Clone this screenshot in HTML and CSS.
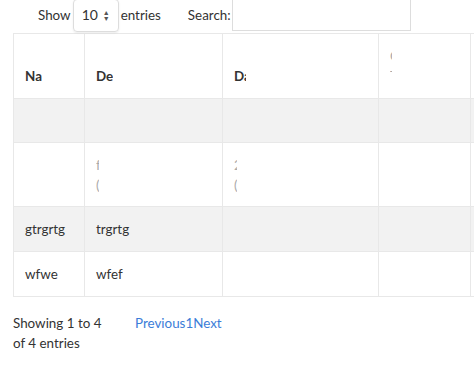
FILE: index.html
```html
<!DOCTYPE html>
<html lang="en">
<head>
    <meta charset="UTF-8">
    <meta name="viewport" content="width=device-width, initial-scale=1.0">
    <title>Entries</title>
    <link rel="stylesheet" href="styles.css">
</head>
<body>
    <div class="controls">
        <label class="length">Show
            <span class="select">10 <span class="arrows">&#9650;<br>&#9660;</span></span>
            entries</label>
        <label class="search">Search:<span class="input"></span></label>
    </div>

    <table class="entries">
        <thead>
            <tr>
                <th class="c1"><div class="clip w17">Name</div></th>
                <th class="c2"><div class="clip w17">Description</div></th>
                <th class="c3"><div class="clip w12">Date</div></th>
                <th class="c4"><div class="clip w2 faint">Created<br>Time</div></th>
                <th class="c5"></th>
            </tr>
        </thead>
        <tbody>
            <tr class="odd">
                <td></td><td></td><td></td><td></td><td></td>
            </tr>
            <tr class="tall">
                <td></td>
                <td><div class="clip w3 faint">fgrtg<br>(edit)</div></td>
                <td><div class="clip w3 faint">2019<br>(06)</div></td>
                <td></td><td></td>
            </tr>
            <tr class="odd">
                <td>gtrgrtg</td><td>trgrtg</td><td></td><td></td><td></td>
            </tr>
            <tr>
                <td>wfwe</td><td>wfef</td><td></td><td></td><td></td>
            </tr>
        </tbody>
    </table>

    <div class="footer-bar">
        <div class="info">Showing 1 to 4 of 4 entries</div>
        <div class="paging"><a href="#">Previous</a><a href="#">1</a><a href="#">Next</a></div>
    </div>
</body>
</html>
```

FILE: styles.css
```css
* {
    margin: 0;
    padding: 0;
    box-sizing: border-box;
}

body {
    font-family: 'Lato', 'Noto Sans', sans-serif;
    font-size: 13.4px;
    line-height: 20px;
    color: #333;
    background: #fff;
    overflow: hidden;
}

/* Top controls */
.controls {
    display: flex;
    align-items: center;
    height: 32px;
    margin-top: -1px;
    padding-left: 38px;
}

.length {
    display: flex;
    align-items: center;
    gap: 2px;
}

.select {
    display: flex;
    align-items: center;
    justify-content: space-between;
    width: 46px;
    height: 33px;
    padding: 0 8px 0 8px;
    border: 1px solid #ddd;
    border-radius: 4px;
    box-shadow: 0 1px 2px rgba(0, 0, 0, 0.08);
    font-size: 14px;
}

.arrows {
    font-size: 7px;
    line-height: 6px;
    color: #555;
    text-align: center;
}

.search {
    display: flex;
    align-items: center;
    margin-left: 27px;
}

.input {
    display: block;
    width: 179px;
    height: 32px;
    margin-left: 1px;
    border: 1px solid #ddd;
}

/* Table */
.entries {
    margin: 2px 0 0 13px;
    border-collapse: collapse;
    table-layout: fixed;
    width: 500px;
}

.entries th,
.entries td {
    padding: 12px 11px;
    border: 1px solid #e8e8e8;
    text-align: left;
    vertical-align: middle;
}

.entries th {
    height: 63px;
    vertical-align: bottom;
    font-weight: bold;
}

.entries td {
    height: 44px;
}

.entries tr.tall td {
    padding-bottom: 11px;
}

.c1 { width: 71px; }
.c2 { width: 138px; }
.c3 { width: 156px; }
.c4 { width: 92px; }
.c5 { width: 43px; }

.entries tr.odd td {
    background-color: #f2f2f2;
}

.clip {
    overflow: hidden;
    white-space: nowrap;
}

.w2 { width: 2px; }
.w3 { width: 3px; }
.w12 { width: 12px; }
.w17 { width: 17px; }

.faint {
    color: #aaa;
    font-weight: normal;
}

/* Footer */
.footer-bar {
    display: flex;
    align-items: flex-start;
    margin: 16px 0 0 13px;
}

.info {
    width: 100px;
}

.paging {
    margin-left: 22px;
}

.paging a {
    color: #3b7dd8;
    text-decoration: none;
}
```
